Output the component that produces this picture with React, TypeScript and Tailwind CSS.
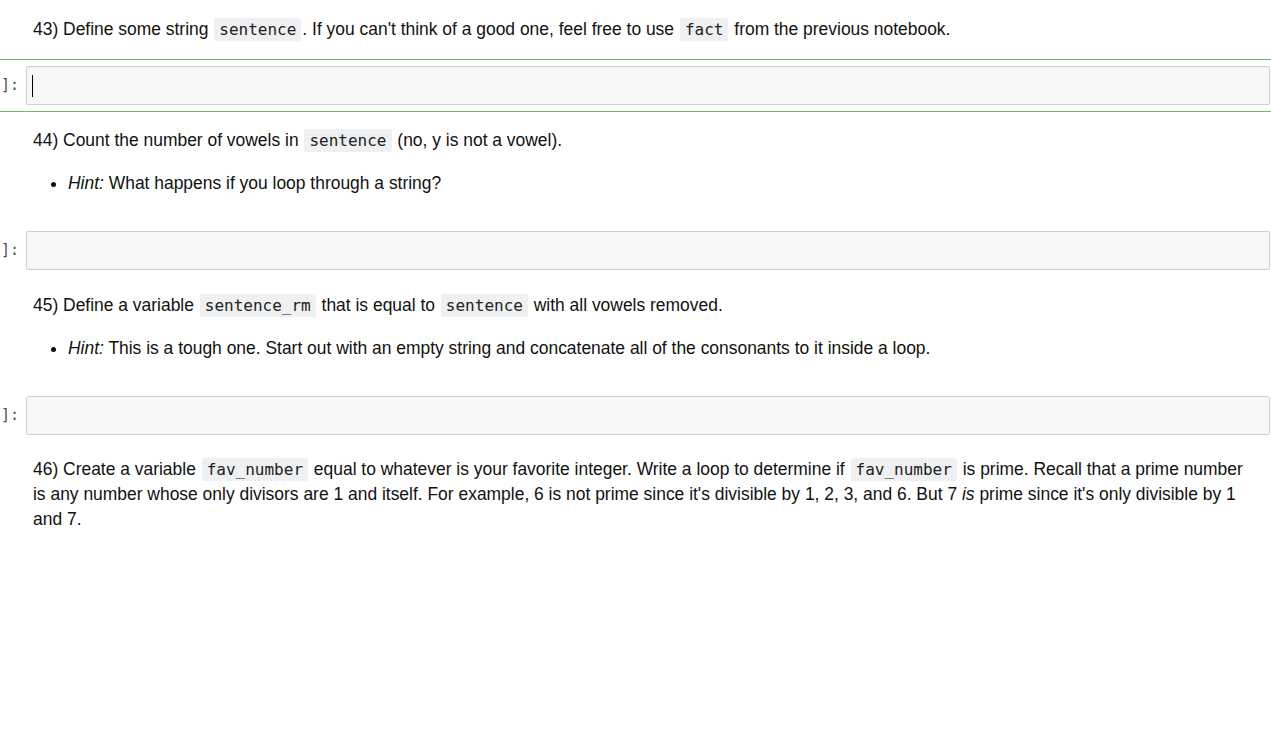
import React from 'react';

const Code: React.FC<{ children: React.ReactNode }> = ({ children }) => (
  <code className="bg-[#eff0f1] rounded-[2px] px-[5px] py-[2px] mx-[1px] font-['DejaVu_Sans_Mono',monospace] text-[16px] text-[#222]">
    {children}
  </code>
);

const CodeCell: React.FC<{ selected?: boolean }> = ({ selected }) => (
  <div className="flex flex-col">
    <div className={selected ? 'h-px bg-[#6fb56f]' : 'h-px bg-white'} />
    <div className="flex py-[6px]">
      <div className="w-[26px] shrink-0 flex items-center pl-[1px] whitespace-nowrap font-['DejaVu_Sans_Mono',monospace] text-[15px] text-[#4a4f5a]">
        ]:
      </div>
      <div className="flex-1 mr-[1px] h-[39px] bg-[#f7f7f7] border border-[#cfcfcf] rounded-[2px] flex items-center px-[5px]">
        {selected && <div className="w-[1px] h-[22px] bg-black" />}
      </div>
    </div>
    <div className={selected ? 'h-px bg-[#6fb56f]' : 'h-px bg-white'} />
  </div>
);

const Hint: React.FC<{ children: React.ReactNode }> = ({ children }) => (
  <ul className="list-disc pl-[35px] mt-[18px] mb-[10px]">
    <li>
      <em>Hint:</em> {children}
    </li>
  </ul>
);

export default function App() {
  return (
    <div className="bg-white min-h-[756px] font-['Liberation_Sans',Arial,sans-serif] text-[17.45px] leading-[25px] text-[#111]">
      <div className="pl-[33px] pr-[16px] pt-[17px] pb-[17px]">
        <p>
          43) Define some string <Code>sentence</Code>. If you can't think of a good one, feel free to use{' '}
          <Code>fact</Code> from the previous notebook.
        </p>
      </div>
      <CodeCell selected />

      <div className="pl-[33px] pr-[16px] pt-[16px] pb-[18px]">
        <p>
          44) Count the number of vowels in <Code>sentence</Code> (no, y is not a vowel).
        </p>
        <Hint>What happens if you loop through a string?</Hint>
      </div>
      <CodeCell />

      <div className="pl-[33px] pr-[16px] pt-[16px] pb-[18px]">
        <p>
          45) Define a variable <Code>sentence_rm</Code> that is equal to <Code>sentence</Code> with all vowels
          removed.
        </p>
        <Hint>
          This is a tough one. Start out with an empty string and concatenate all of the consonants to it inside a
          loop.
        </Hint>
      </div>
      <CodeCell />

      <div className="pl-[33px] pr-[16px] pt-[15px] pb-[18px]">
        <p>
          46) Create a variable <Code>fav_number</Code> equal to whatever is your favorite integer. Write a loop to
          determine if <Code>fav_number</Code> is prime. Recall that a prime number is any number whose only divisors
          are 1 and itself. For example, 6 is not prime since it's divisible by 1, 2, 3, and 6. But 7 <em>is</em>{' '}
          prime since it's only divisible by 1 and 7.
        </p>
      </div>
    </div>
  );
}
